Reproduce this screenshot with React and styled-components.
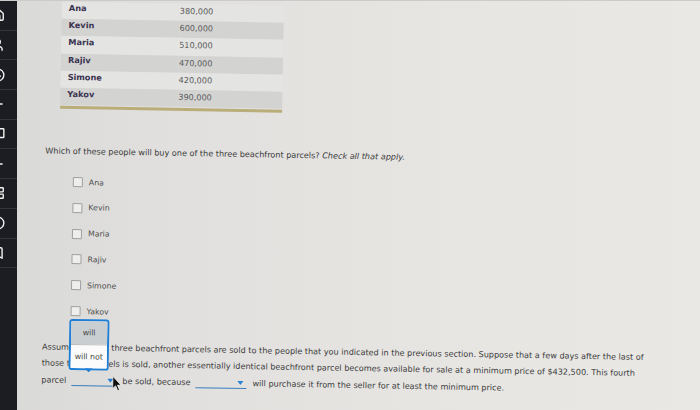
import React from 'react'
import styled, { createGlobalStyle } from 'styled-components'
import { Home, User, Clock, Minus, BookOpen, Plus, LayoutGrid, Circle, Bookmark } from 'lucide-react'

const people = [
  ['Ana', '380,000'],
  ['Kevin', '600,000'],
  ['Maria', '510,000'],
  ['Rajiv', '470,000'],
  ['Simone', '420,000'],
  ['Yakov', '390,000'],
]

const navIcons = [Home, User, Clock, Minus, BookOpen, Plus, LayoutGrid, Circle, Bookmark]

const App = () => {
  return (
    <>
      <GlobalStyle />
      <Page>
        <Sidebar>
          {navIcons.map((Icon, i) => (
            <NavItem key={i}>
              <Icon size={14} color='#f2f2f2' strokeWidth={2.4} />
            </NavItem>
          ))}
        </Sidebar>
        <Content>
          <TableWrap>
            <Table>
              <tbody>
                {people.map(([name, value], i) => (
                  <Row key={name} shaded={i % 2 === 1}>
                    <NameCell>{name}</NameCell>
                    <ValueCell>{value}</ValueCell>
                  </Row>
                ))}
              </tbody>
            </Table>
          </TableWrap>

          <Question>
            Which of these people will buy one of the three beachfront parcels? <em>Check all that apply.</em>
          </Question>

          <CheckList>
            {people.map(([name]) => (
              <CheckRow key={name}>
                <Box />
                <span>{name}</span>
              </CheckRow>
            ))}
          </CheckList>

          <Paragraph>
            Assume that the three beachfront parcels are sold to the people that you indicated in the previous
            section. Suppose that a few days after the last of those three parcels is sold, another essentially
            identical beachfront parcel becomes available for sale at a minimum price of $432,500. This fourth
            parcel
            <Select width={45}>
              <Arrow />
              <Popup>
                <Option selected>will</Option>
                <Option>will not</Option>
              </Popup>
              <Cursor width='9' height='16' viewBox='0 0 11 19'>
                <path d='M0.5 0.5 L0.5 15.5 L4 12 L6.8 18 L9 17 L6.3 11.2 L10.8 11.2 Z' fill='#111' stroke='#fff' strokeWidth='0.9' />
              </Cursor>
            </Select>
            be sold, because
            <Select width={51}>
              <Arrow />
            </Select>
            will purchase it from the seller for at least the minimum price.
          </Paragraph>
        </Content>
      </Page>
    </>
  )
}

export default App

const GlobalStyle = createGlobalStyle`
  html, body {
    margin: 0;
    padding: 0;
  }
  body {
    width: 700px;
    height: 410px;
    overflow: hidden;
    background: #e3e2e0;
    font-family: "DejaVu Sans", Verdana, sans-serif;
  }
`
const Page = styled.div`
  display: flex;
  width: 700px;
  height: 410px;
  overflow: hidden;
  border-top: 1px solid #cbcbc9;
  box-sizing: border-box;
  background: linear-gradient(90deg, #d9d9d7 0%, #e1e0de 25%, #e7e6e3 70%, #e9e8e5 100%);
`
const Sidebar = styled.nav`
  width: 17px;
  flex-shrink: 0;
  display: flex;
  flex-direction: column;
  overflow: hidden;
  background: #1c1d22;
`
const NavItem = styled.div`
  height: 29.7px;
  box-sizing: border-box;
  display: flex;
  align-items: center;
  border-bottom: 1px solid #34353b;

  svg {
    margin-left: -9px;
  }
`
const Content = styled.main`
  flex: 1;
  padding: 0 0 0 31px;
  transform: rotate(1deg);
  transform-origin: 0 0;
`
const TableWrap = styled.div`
  width: 222px;
  margin-left: 14px;
  padding-bottom: 1px;
  border-bottom: 3px solid #b9ad79;
`
const Table = styled.table`
  width: 100%;
  border-collapse: collapse;
`
const Row = styled.tr`
  height: 17.2px;
  background: ${p => (p.shaded ? '#d3d3d2' : '#e4e4e2')};
`
const NameCell = styled.td`
  width: 111px;
  padding: 1px 0 0 7px;
  vertical-align: top;
  line-height: 10px;
  font-size: 8.2px;
  font-weight: bold;
  color: #3a3350;
`
const ValueCell = styled.td`
  padding: 2px 0 0;
  vertical-align: top;
  line-height: 10px;
  font-size: 8.1px;
  color: #5a5a5a;
`
const Question = styled.p`
  margin: 36px 0 0;
  font-size: 8.1px;
  line-height: 12px;
  color: #3a3a3a;

  em {
    font-style: italic;
  }
`
const CheckList = styled.div`
  display: flex;
  flex-direction: column;
  margin-top: 12px;
  padding-left: 28px;
`
const CheckRow = styled.label`
  height: 25.8px;
  display: flex;
  align-items: center;
  gap: 6px;
  font-size: 7.8px;
  color: #505050;
`
const Box = styled.span`
  width: 8px;
  height: 8px;
  border: 1px solid #a0a0a0;
  border-radius: 1px;
  background: #eeeeec;
`
const Paragraph = styled.p`
  width: 618px;
  margin: 15px 0 0;
  font-size: 8.1px;
  line-height: 16.5px;
  color: #3c3c3c;
`
const Select = styled.span`
  position: relative;
  display: inline-block;
  width: ${p => p.width}px;
  height: 10px;
  margin: 0 6px 0 5px;
  vertical-align: -3px;
  border-bottom: 1px solid #3b7cc0;
`
const Arrow = styled.span`
  position: absolute;
  right: 3px;
  bottom: 3px;
  border-left: 3.5px solid transparent;
  border-right: 3.5px solid transparent;
  border-top: 4px solid #2b80d2;
`
const Popup = styled.div`
  position: absolute;
  left: -3px;
  bottom: calc(100% + 5px);
  width: 36px;
  display: flex;
  flex-direction: column;
  border: 2px solid #1f7ed6;
  border-radius: 3px;
  background: #fbfbfb;
  line-height: normal;

  &::after {
    content: '';
    position: absolute;
    left: 14px;
    top: 100%;
    border-left: 4px solid transparent;
    border-right: 4px solid transparent;
    border-top: 4px solid #1f7ed6;
  }
`
const Option = styled.div`
  height: 23px;
  display: flex;
  align-items: center;
  justify-content: center;
  font-size: 7.8px;
  color: #454545;
  background: ${p => (p.selected ? '#c9ced1' : '#fbfbfb')};
  & + & {
    border-top: 1px solid #b9bdbf;
  }
`
const Cursor = styled.svg`
  position: absolute;
  left: 41px;
  top: 0;
`
